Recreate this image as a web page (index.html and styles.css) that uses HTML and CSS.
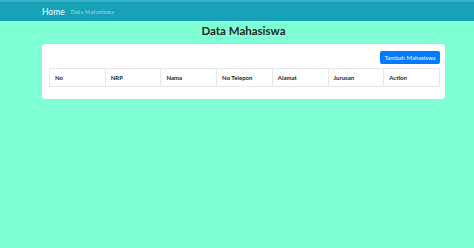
FILE: index.html
```html
<!DOCTYPE html>
<html lang="en">
<head>
    <meta charset="UTF-8">
    <meta name="viewport" content="width=device-width, initial-scale=1.0">
    <title>Data Mahasiswa</title>
    <link rel="stylesheet" href="styles.css">
</head>
<body>

    <nav class="navbar">
        <a class="nav-brand" href="#">Home</a>
        <a class="nav-link" href="#">Data Mahasiswa</a>
    </nav>

    <div class="container">
        <h1 class="page-title">Data Mahasiswa</h1>

        <div class="card">
            <div class="card-actions">
                <button class="add-btn">Tambah Mahasiswa</button>
            </div>
            <table class="data-table">
                <thead>
                    <tr>
                        <th>No</th>
                        <th>NRP</th>
                        <th>Nama</th>
                        <th>No Telepon</th>
                        <th>Alamat</th>
                        <th>Jurusan</th>
                        <th>Action</th>
                    </tr>
                </thead>
                <tbody></tbody>
            </table>
        </div>
    </div>

</body>
</html>
```

FILE: styles.css
```css
body {
    font-family: 'Lato', 'Open Sans', sans-serif;
    margin: 0;
    padding: 0;
    background-color: #7fffd4;
    color: #212529;
}

.navbar {
    height: 19px;
    border-top: 2px solid #34b3c6;
    background-color: #17a2b8;
    display: flex;
    align-items: center;
    padding-left: 42px;
}

.nav-brand {
    color: #fff;
    font-size: 8.5px;
    text-decoration: none;
    margin-right: 6px;
}

.nav-link {
    color: rgba(255, 255, 255, 0.55);
    font-size: 6px;
    text-decoration: none;
}

.container {
    width: 403px;
    margin-left: 42px;
}

.page-title {
    text-align: center;
    font-size: 11.5px;
    font-weight: bold;
    margin: 0;
    height: 23px;
    line-height: 20px;
}

.card {
    background-color: #fff;
    border-radius: 3px;
    padding: 7px 5px 12px 7px;
}

.card-actions {
    display: flex;
    justify-content: flex-end;
    margin-bottom: 4px;
}

.add-btn {
    background-color: #007bff;
    color: #fff;
    border: none;
    border-radius: 2px;
    font-family: inherit;
    font-size: 6px;
    width: 60px;
    height: 13px;
    padding: 0;
}

.data-table {
    width: 391px;
    border-collapse: collapse;
    table-layout: fixed;
}

.data-table th {
    border: 1px solid #e6e8eb;
    height: 17px;
    padding: 0 5px;
    text-align: left;
    font-size: 6px;
    font-weight: bold;
}
```
